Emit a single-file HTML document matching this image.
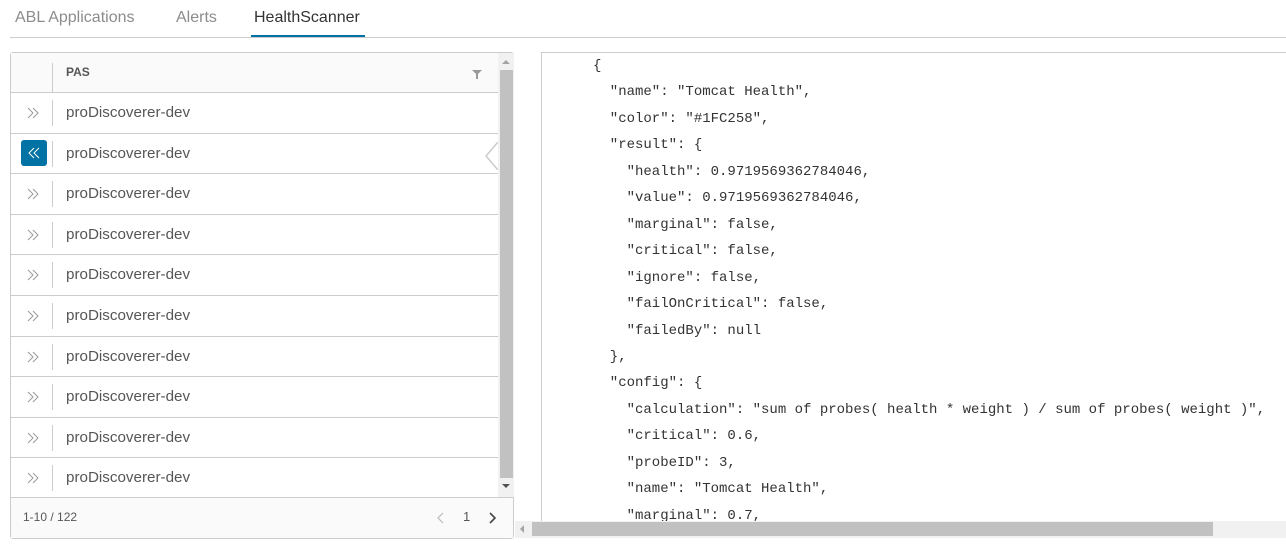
<!DOCTYPE html>
<html><head><style>
*{box-sizing:border-box;margin:0;padding:0}
body{width:1286px;height:544px;background:#fff;font-family:"Liberation Sans",sans-serif;position:relative;overflow:hidden;color:#565656}
.tab{position:absolute;top:9px;font-size:16px;color:#8c8c8c}
.abs{position:absolute}
.row{position:absolute;left:11px;width:487px;height:40px;border-top:1px solid #ccc}
.row .sep{position:absolute;left:41px;top:7px;width:1px;height:26px;background:#ccc}
.row .t{position:absolute;left:55px;top:11px;font-size:15.2px;color:#565656}
.row svg{position:absolute;left:16px;top:14px}
pre{position:absolute;left:593px;top:53px;font-family:"Liberation Mono",monospace;font-size:14px;line-height:26.45px;color:#333}
</style></head><body>
<div class="tab" style="left:15px">ABL Applications</div>
<div class="tab" style="left:176px">Alerts</div>
<div class="tab" style="left:254px;color:#333">HealthScanner</div>
<div class="abs" style="left:251px;top:35px;width:114px;height:3px;background:#0072a3"></div>
<div class="abs" style="left:10px;top:37px;width:1276px;height:1px;background:#ccc"></div>

<div class="abs" style="left:10px;top:52px;width:504px;height:487px;border:1px solid #ccc;border-radius:3px"></div>
<div class="abs" style="left:11px;top:53px;width:487px;height:39px;background:#fafafa"></div>
<div class="abs" style="left:52px;top:63px;width:1px;height:30px;background:#ccc"></div>
<div class="abs" style="left:66px;top:65px;font-size:12px;font-weight:bold;color:#565656">PAS</div>
<svg class="abs" style="left:472px;top:70px" width="10" height="9"><path d="M0 0H10L6 4V9H4V4Z" fill="#9a9a9a"/></svg>

<div class="row" style="top:92px"><svg width="12" height="12"><path d="M1 1L6 6L1 11M6 1L11 6L6 11" fill="none" stroke="#999" stroke-width="1"/></svg><div class="sep"></div><div class="t">proDiscoverer-dev</div></div>
<div class="row" style="top:133px"><div class="abs" style="left:10px;top:6px;width:26px;height:26px;background:#0072a3;border-radius:3px"><svg style="left:7px;top:7px" width="12" height="12"><path d="M11 1L6 6L11 11M6 1L1 6L6 11" fill="none" stroke="#fff" stroke-width="1"/></svg></div><div class="sep"></div><div class="t">proDiscoverer-dev</div></div>
<div class="row" style="top:173px"><svg width="12" height="12"><path d="M1 1L6 6L1 11M6 1L11 6L6 11" fill="none" stroke="#999" stroke-width="1"/></svg><div class="sep"></div><div class="t">proDiscoverer-dev</div></div>
<div class="row" style="top:214px"><svg width="12" height="12"><path d="M1 1L6 6L1 11M6 1L11 6L6 11" fill="none" stroke="#999" stroke-width="1"/></svg><div class="sep"></div><div class="t">proDiscoverer-dev</div></div>
<div class="row" style="top:254px"><svg width="12" height="12"><path d="M1 1L6 6L1 11M6 1L11 6L6 11" fill="none" stroke="#999" stroke-width="1"/></svg><div class="sep"></div><div class="t">proDiscoverer-dev</div></div>
<div class="row" style="top:295px"><svg width="12" height="12"><path d="M1 1L6 6L1 11M6 1L11 6L6 11" fill="none" stroke="#999" stroke-width="1"/></svg><div class="sep"></div><div class="t">proDiscoverer-dev</div></div>
<div class="row" style="top:336px"><svg width="12" height="12"><path d="M1 1L6 6L1 11M6 1L11 6L6 11" fill="none" stroke="#999" stroke-width="1"/></svg><div class="sep"></div><div class="t">proDiscoverer-dev</div></div>
<div class="row" style="top:376px"><svg width="12" height="12"><path d="M1 1L6 6L1 11M6 1L11 6L6 11" fill="none" stroke="#999" stroke-width="1"/></svg><div class="sep"></div><div class="t">proDiscoverer-dev</div></div>
<div class="row" style="top:417px"><svg width="12" height="12"><path d="M1 1L6 6L1 11M6 1L11 6L6 11" fill="none" stroke="#999" stroke-width="1"/></svg><div class="sep"></div><div class="t">proDiscoverer-dev</div></div>
<div class="row" style="top:457px"><svg width="12" height="12"><path d="M1 1L6 6L1 11M6 1L11 6L6 11" fill="none" stroke="#999" stroke-width="1"/></svg><div class="sep"></div><div class="t">proDiscoverer-dev</div></div>
<svg class="abs" style="left:485px;top:142px" width="14" height="28"><path d="M13 0L1 14L13 28" fill="#fff" stroke="#ccc" stroke-width="1.5"/></svg>

<div class="abs" style="left:11px;top:497px;width:502px;height:41px;background:#fafafa;border-top:1px solid #ccc"></div>
<div class="abs" style="left:23px;top:510px;font-size:12px;color:#565656">1-10 / 122</div>
<svg class="abs" style="left:437px;top:512px" width="8" height="12"><path d="M6 1L1 6L6 11" fill="none" stroke="#bbb" stroke-width="1.2"/></svg>
<div class="abs" style="left:463px;top:509px;font-size:13px;color:#565656">1</div>
<svg class="abs" style="left:489px;top:512px" width="8" height="12"><path d="M1 1L6 6L1 11" fill="none" stroke="#444" stroke-width="1.6"/></svg>

<div class="abs" style="left:498px;top:53px;width:16px;height:444px;background:#f1f1f1"></div>
<div class="abs" style="left:500px;top:70px;width:13px;height:408px;background:#c1c1c1"></div>
<div class="abs" style="left:502px;top:60px;width:0;height:0;border:4px solid transparent;border-bottom-color:#a3a3a3;border-top:none"></div>
<div class="abs" style="left:502px;top:484px;width:0;height:0;border:4px solid transparent;border-top-color:#505050;border-bottom:none"></div>

<div class="abs" style="left:541px;top:52px;width:1px;height:470px;background:#ccc"></div>
<div class="abs" style="left:541px;top:52px;width:745px;height:1px;background:#ccc"></div>
<pre>{
  "name": "Tomcat Health",
  "color": "#1FC258",
  "result": {
    "health": 0.9719569362784046,
    "value": 0.9719569362784046,
    "marginal": false,
    "critical": false,
    "ignore": false,
    "failOnCritical": false,
    "failedBy": null
  },
  "config": {
    "calculation": "sum of probes( health * weight ) / sum of probes( weight )",
    "critical": 0.6,
    "probeID": 3,
    "name": "Tomcat Health",
    "marginal": 0.7,</pre>
<div class="abs" style="left:515px;top:521px;width:771px;height:17px;background:#f1f1f1"></div>
<div class="abs" style="left:532px;top:522px;width:681px;height:14px;background:#c1c1c1"></div>
<div class="abs" style="left:520px;top:525px;width:0;height:0;border:4px solid transparent;border-right-color:#a3a3a3;border-left:none"></div>
</body></html>
